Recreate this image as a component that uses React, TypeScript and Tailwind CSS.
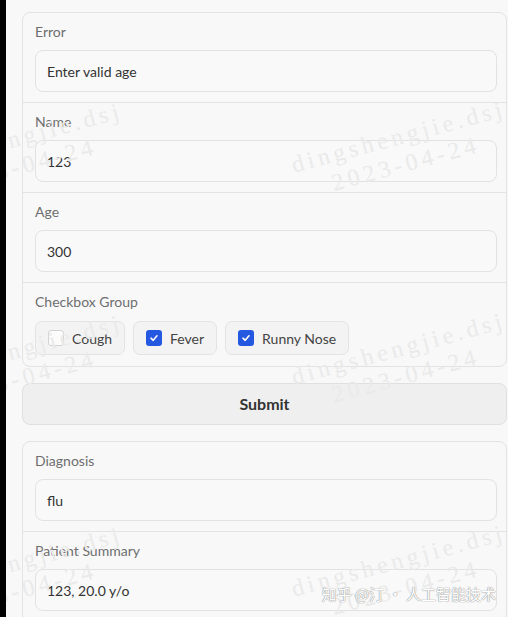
import React from "react";

const font = { fontFamily: "Lato, 'Noto Sans', sans-serif" };

function Field({ label, value, first }: { label: string; value: string; first?: boolean }) {
  return (
    <div className={`${first ? "" : "border-t border-[#e3e3e3]"} pl-[12px] pr-[9px] pt-[11px] pb-[10px]`}>
      <div className="text-[14px] leading-[16px] text-[#6e6e6e] mb-[10px]">{label}</div>
      <div className="h-[42px] flex items-center rounded-[8px] border border-[#e2e2e2] bg-[#f9f9f9] pl-[11px] text-[14px] text-[#333]">
        {value}
      </div>
    </div>
  );
}

function Check({ label, checked }: { label: string; checked: boolean }) {
  return (
    <div className="h-[34px] flex items-center gap-[8px] pl-[12px] pr-[12px] rounded-[7px] border border-[#e3e3e3] bg-[#f3f3f3] text-[14px] text-[#444]">
      {checked ? (
        <span className="w-[16px] h-[16px] rounded-[3px] bg-[#2458e0] flex items-center justify-center">
          <svg width="10" height="10" viewBox="0 0 10 10" fill="none">
            <path d="M2 5.2 L4.2 7.3 L8 2.8" stroke="white" strokeWidth="1.6" strokeLinecap="round" strokeLinejoin="round" />
          </svg>
        </span>
      ) : (
        <span className="w-[16px] h-[16px] rounded-[3px] border border-[#d4d4d4] bg-[#fbfbfb]" />
      )}
      <span>{label}</span>
    </div>
  );
}

function Mark({ x, y }: { x: number; y: number }) {
  return (
    <div
      className="absolute -translate-x-1/2 -translate-y-1/2 -rotate-[15deg] text-center text-[24px] leading-[28px] tracking-[4px] text-[#eaeaea] whitespace-nowrap pointer-events-none"
      style={{ left: x, top: y, fontFamily: "'Liberation Serif', 'DejaVu Serif', serif" }}
    >
      <div>dingshengjie.dsj</div>
      <div>2023-04-24</div>
    </div>
  );
}

export default function App() {
  return (
    <div className="relative w-[508px] h-[617px] overflow-hidden flex bg-[#f8f8f8]" style={font}>
      <div className="relative z-10 w-[6px] shrink-0 bg-black" />
      <div className="flex-1 pl-[16px] pr-[1px] pt-[12px] flex flex-col">
        <div className="shrink-0 rounded-[8px] border border-[#e3e3e3] bg-[#f8f8f8]">
          <Field first label="Error" value="Enter valid age" />
          <Field label="Name" value="123" />
          <Field label="Age" value="300" />
          <div className="border-t border-[#e3e3e3] px-[12px] pt-[11px] pb-[11px]">
            <div className="text-[14px] leading-[16px] text-[#6e6e6e] mb-[11px]">Checkbox Group</div>
            <div className="flex gap-[8px]">
              <Check label="Cough" checked={false} />
              <Check label="Fever" checked />
              <Check label="Runny Nose" checked />
            </div>
          </div>
        </div>
        <button className="shrink-0 mt-[16px] h-[42px] rounded-[8px] border border-[#e0e0e0] bg-[#efefef] text-[16px] font-bold text-[#333]">
          Submit
        </button>
        <div className="shrink-0 mt-[16px] rounded-[8px] border border-[#e3e3e3] bg-[#f8f8f8]">
          <Field first label="Diagnosis" value="flu" />
          <Field label="Patient Summary" value="123, 20.0 y/o" />
        </div>
      </div>
      <Mark x={402} y={150} />
      <Mark x={19} y={152} />
      <Mark x={402} y={362} />
      <Mark x={19} y={364} />
      <Mark x={402} y={574} />
      <Mark x={19} y={576} />
      <div
        className="absolute right-[12px] top-[584px] text-[15px] leading-[20px] text-white whitespace-nowrap [text-shadow:0_0_1px_#8a8a8a,0_0_1px_#8a8a8a]"
        style={{ fontFamily: "'Noto Sans CJK SC', 'Noto Sans', sans-serif" }}
      >
        知乎 @汀 · 人工智能技术
      </div>
    </div>
  );
}
